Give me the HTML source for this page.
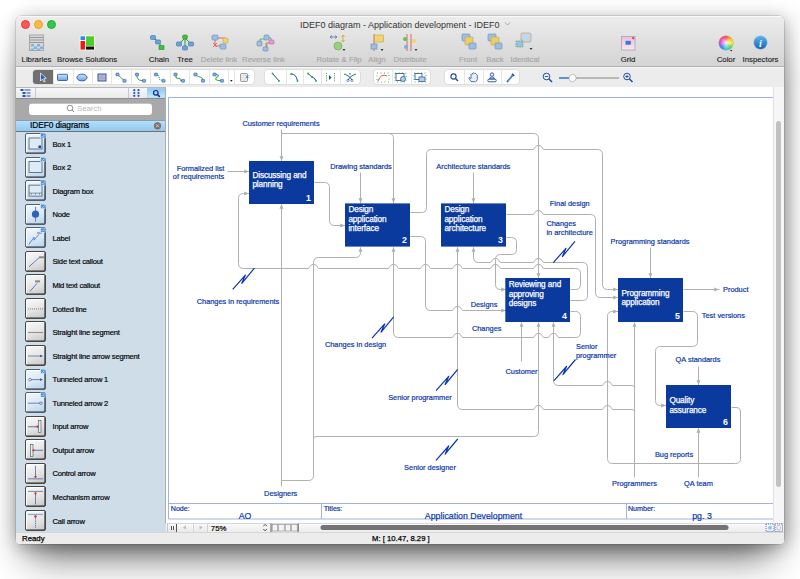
<!DOCTYPE html>
<html><head><meta charset="utf-8">
<style>
*{margin:0;padding:0;box-sizing:border-box}
html,body{width:800px;height:579px;overflow:hidden;background:#fff;font-family:"Liberation Sans",sans-serif}
.a{position:absolute}
#shadow{position:absolute;left:16px;top:16px;width:768px;height:528px;border-radius:5px;box-shadow:0 24px 36px -12px rgba(0,0,0,0.6),0 4px 16px rgba(0,0,0,0.18),6px 0 20px rgba(0,0,0,0.15),0 0 0 0.5px rgba(0,0,0,0.22)}
#win{position:absolute;left:16px;top:16px;width:768px;height:528px;border-radius:5px 5px 4px 4px;overflow:hidden;background:#ececec}
#tb1{position:absolute;left:0;top:0;width:768px;height:51px;background:linear-gradient(#ededed,#d4d4d4);box-shadow:inset 0 1px 0 #f9f9f9;border-bottom:1px solid #b1b1b1}
#tb2{position:absolute;left:0;top:51px;width:768px;height:21px;background:#ececec;border-top:1px solid #f6f6f6;border-bottom:1px solid #a9a9a9}
.tl{position:absolute;width:9px;height:9px;border-radius:50%;top:4px}
.lbl{position:absolute;font-size:7.8px;color:#1a1a1a;-webkit-text-stroke:0.12px currentColor;white-space:nowrap;text-align:center}
.dis{color:#a5a5a5}
.grp{position:absolute;top:3px;height:14px;background:#fff;border-radius:3px;box-shadow:0 0 0 0.5px #cfcfcf}
.sep{position:absolute;top:0;width:1px;height:14px;background:#e6e6e6}
#side{position:absolute;left:0;top:71px;width:150px;height:445px;background:#cfdde8}
.it{position:absolute;left:9px;width:21px;height:21px;border:1px solid #474747;border-radius:2px;background:linear-gradient(160deg,#fbfbfb 0%,#e4e4e4 55%,#c6c6c6 100%);box-shadow:inset -0.6px -0.6px 0 #2e2e2e,inset 1px 1px 0 #fff}
.itb{background:linear-gradient(160deg,#f3f8fd 0%,#d9e8f5 55%,#b9d2ea 100%);border-color:#4b5f78}
.itl{position:absolute;left:36px;font-size:7.6px;color:#000;white-space:nowrap;letter-spacing:-0.2px;-webkit-text-stroke:0.18px #000}
#canvas{position:absolute;left:150px;top:71px;width:607px;height:436px;background:#fff}
#status{position:absolute;left:0;top:516px;width:768px;height:12px;background:#ececec;border-top:1px solid #d6d6d6}
svg text{font-family:"Liberation Sans",sans-serif}
</style></head><body>
<div id="shadow"></div>
<div id="win">
  <div id="tb1">
    <div class="tl" style="left:5px;background:#fc5753;border:0.5px solid #de3f3b"></div>
    <div class="tl" style="left:18px;background:#fdbc40;border:0.5px solid #de9f34"></div>
    <div class="tl" style="left:31px;background:#33c748;border:0.5px solid #27aa35"></div>
    <div class="a" style="left:284px;top:3.7px;font-size:9px;color:#333;white-space:nowrap">IDEF0 diagram - Application development - IDEF0</div><svg class="a" style="left:488px;top:5px" width="8" height="6"><path d="M1,1.5 L3.5,4 L6,1.5" stroke="#9a9a9a" stroke-width="0.9" fill="none"/></svg>
    <svg class="a" style="left:0;top:0" width="768" height="50">
      <!-- Libraries -->
      <rect x="13.5" y="19" width="14" height="15.5" fill="#d8d8d8" stroke="#9a9a9a" stroke-width="0.8"/>
      <g stroke="#8f8f8f" stroke-width="0.9"><line x1="14" y1="21.5" x2="27" y2="21.5"/><line x1="14" y1="24" x2="27" y2="24"/><line x1="14" y1="26.5" x2="27" y2="26.5"/></g>
      <g fill="#7fb2e3"><rect x="15" y="28" width="3" height="2.5"/><rect x="21" y="28" width="3" height="2.5"/><rect x="18" y="30.5" width="3" height="2.5"/><rect x="24" y="30.5" width="3" height="2.5"/><rect x="15" y="32.5" width="3" height="2"/><rect x="21" y="32.5" width="3" height="2"/></g>
      <!-- Browse Solutions -->
      <rect x="63.5" y="19.3" width="15.4" height="15.2" rx="2" fill="#fff" stroke="#e3e3e3" stroke-width="0.6"/>
      <rect x="64.5" y="20.3" width="4.5" height="3.8" fill="#2b8ae6"/>
      <rect x="64.5" y="25" width="4.5" height="8.6" fill="#f0190f"/>
      <rect x="70" y="20.3" width="8" height="9.6" fill="#4fcb2a"/>
      <rect x="70" y="30.5" width="8" height="3.1" fill="#111"/>
      <!-- Chain -->
      <g stroke="#2e9c2e" stroke-width="1" fill="none"><path d="M137,22 L142,25 L145,30"/></g>
      <rect x="134.5" y="19.5" width="5" height="4" rx="1" fill="#6aa4dd" stroke="#3c6fb0" stroke-width="0.6"/>
      <rect x="139.5" y="24" width="5" height="4" rx="1" fill="#6aa4dd" stroke="#3c6fb0" stroke-width="0.6"/>
      <path d="M143,29.5 h5 v4 h-5z" fill="#3cc23c" stroke="#2a8f2a" stroke-width="0.6"/>
      <!-- Tree -->
      <g stroke="#2e9c2e" stroke-width="1" fill="none"><path d="M169,22 L163,28 M169,22 L175,28 M169,22 L169,31"/></g>
      <rect x="166.5" y="19" width="5" height="4" rx="1.5" fill="#3cc23c" stroke="#2a8f2a" stroke-width="0.6"/>
      <rect x="160.5" y="26" width="5" height="4" rx="1" fill="#6aa4dd" stroke="#3c6fb0" stroke-width="0.6"/>
      <rect x="172.5" y="26" width="5" height="4" rx="1" fill="#6aa4dd" stroke="#3c6fb0" stroke-width="0.6"/>
      <rect x="166.5" y="30" width="5" height="4" rx="1" fill="#6aa4dd" stroke="#3c6fb0" stroke-width="0.6"/>
      <!-- Delete link -->
      <g opacity="0.82">
      <path d="M199,22 v8 M199,30 h7 M201,22 h8" stroke="#e0503c" stroke-width="1" fill="none"/>
      <rect x="196" y="19" width="6" height="5" rx="1" fill="#8fb8e6" stroke="#4a78b0" stroke-width="0.6"/>
      <rect x="207" y="22" width="5" height="5" rx="1" fill="#f2d25a" stroke="#b59a2a" stroke-width="0.6"/>
      <rect x="204" y="28" width="6" height="5" rx="1" fill="#8fb8e6" stroke="#4a78b0" stroke-width="0.6"/>
      <path d="M197,27 l4,4 M201,27 l-4,4" stroke="#e0503c" stroke-width="1"/>
      </g>
      <!-- Reverse link -->
      <g opacity="0.82">
      <path d="M244,26 v-3 h4 M252,22 h3 v4 M251,28 v3" stroke="#3cb043" stroke-width="1" fill="none"/>
      <path d="M253,27 h-3 v5" stroke="#e0503c" stroke-width="1" fill="none"/>
      <rect x="248" y="19" width="5" height="5" rx="1" fill="#8fb8e6" stroke="#4a78b0" stroke-width="0.6"/>
      <rect x="241" y="25" width="5" height="5" rx="1" fill="#8fb8e6" stroke="#4a78b0" stroke-width="0.6"/>
      <rect x="253" y="24" width="5" height="4" rx="1" fill="#e38fd0" stroke="#b04a9a" stroke-width="0.6"/>
      <rect x="247" y="31" width="5" height="4" rx="1" fill="#8fb8e6" stroke="#4a78b0" stroke-width="0.6"/>
      </g>
      <!-- Rotate & Flip -->
      <g opacity="0.82">
      <path d="M314,21 h7 M314,21 l2,-1.5 M314,21 l2,1.5 M321,21 l-2,-1.5 M321,21 l-2,1.5" stroke="#4a78b0" stroke-width="1" fill="none"/>
      <path d="M327,19 v7 M327,19 l-1.5,2 M327,19 l1.5,2 M327,26 l-1.5,-2 M327,26 l1.5,-2" stroke="#d8a020" stroke-width="1" fill="none"/>
      <ellipse cx="322" cy="30" rx="4" ry="4" fill="#8ccf6a" stroke="#4a9a3a" stroke-width="0.6"/>
      </g>
      <path d="M326.5,33 l3,0 l-1.5,2z" fill="#333"/>
      <!-- Align -->
      <g opacity="0.82">
      <path d="M358,18 v17" stroke="#e0503c" stroke-width="1"/>
      <rect x="358.5" y="19" width="9" height="7" fill="#f2d25a" stroke="#b59a2a" stroke-width="0.6"/>
      <rect x="355" y="28" width="6" height="5" fill="#8fb8e6" stroke="#4a78b0" stroke-width="0.6"/>
      </g>
      <path d="M364.5,33 l3,0 l-1.5,2z" fill="#333"/>
      <!-- Distribute -->
      <g opacity="0.82">
      <path d="M391,18 v17 M395,18 v17" stroke="#e0503c" stroke-width="1"/>
      <ellipse cx="389" cy="23" rx="2" ry="2" fill="#3cc23c"/>
      <ellipse cx="398" cy="25" rx="2" ry="2" fill="#f2d25a"/>
      <ellipse cx="390" cy="31" rx="2" ry="2" fill="#6aa4dd"/>
      </g>
      <path d="M398.5,33 l3,0 l-1.5,2z" fill="#333"/>
      <!-- Front -->
      <g opacity="0.82">
      <rect x="446" y="18" width="8" height="7" rx="1" fill="#8fb8e6" stroke="#4a78b0" stroke-width="0.6"/>
      <rect x="449" y="21" width="8" height="8" rx="1" fill="#f2c94a" stroke="#b59a2a" stroke-width="0.6"/>
      <rect x="453" y="27" width="7" height="6" rx="1" fill="#8fb8e6" stroke="#4a78b0" stroke-width="0.6"/>
      </g>
      <!-- Back -->
      <g opacity="0.82">
      <rect x="472" y="18" width="8" height="7" rx="1" fill="#8fb8e6" stroke="#4a78b0" stroke-width="0.6"/>
      <rect x="475" y="21" width="8" height="8" rx="1" fill="#f2c94a" stroke="#b59a2a" stroke-width="0.6"/>
      <rect x="479" y="27" width="7" height="6" rx="1" fill="#8fb8e6" stroke="#4a78b0" stroke-width="0.6"/>
      </g>
      <!-- Identical -->
      <g opacity="0.82">
      <rect x="505" y="17" width="10" height="9" rx="1" fill="#b6d7f0" stroke="#e08a6a" stroke-width="0.8"/>
      <rect x="500" y="25" width="7" height="6" fill="#8fb8e6" stroke="#3cb043" stroke-width="0.8" stroke-dasharray="1.5 1"/>
      <path d="M507,25 l-2,-2" stroke="#e08a6a" stroke-width="0.8"/>
      </g>
      <path d="M513.5,32 l3,0 l-1.5,2z" fill="#333"/>
      <!-- Grid -->
      <defs><linearGradient id="gg" x1="0" y1="0" x2="0" y2="1"><stop offset="0" stop-color="#f4bcd0"/><stop offset="1" stop-color="#fbe6ee"/></linearGradient></defs>
      <rect x="605.5" y="20.5" width="13.5" height="13.5" fill="url(#gg)" stroke="#9aa9c0" stroke-width="0.8"/>
      <rect x="609.2" y="24.5" width="6" height="4.5" rx="1" fill="#3c7ad6" stroke="#fff" stroke-width="0.4"/>
      <circle cx="617.2" cy="22.2" r="1.1" fill="#e03c3c"/>
      <!-- Color -->
      <path d="M714,34 l2.4,0 l-1.2,1.6z" fill="#222"/>
      <!-- Inspectors -->
      <defs><linearGradient id="ig" x1="0" y1="0" x2="0" y2="1"><stop offset="0" stop-color="#5fb6f2"/><stop offset="1" stop-color="#1262b8"/></linearGradient></defs>
      <circle cx="744.5" cy="26.5" r="7" fill="url(#ig)" stroke="#f4ddc8" stroke-width="0.6"/>
      <text x="744.5" y="31" font-size="10" font-weight="bold" font-style="italic" fill="#fff" text-anchor="middle" style="font-family:'Liberation Serif',serif">i</text>
    </svg>
    <div class="a" style="left:703px;top:19.5px;width:14px;height:14px;border-radius:50%;background:radial-gradient(circle,rgba(255,255,255,0.9) 0,rgba(255,255,255,0) 70%),conic-gradient(#ff2d2d,#ffb000,#f2ec1a,#35d04a,#1ec8e0,#2a6cf0,#b43ce6,#ff2d9a,#ff2d2d);box-shadow:0 0 0 0.5px rgba(0,0,0,0.3)"></div>
    <div class="lbl" style="left:0;top:38.5px;width:41px">Libraries</div>
    <div class="lbl" style="left:41px;top:38.5px;width:60px">Browse Solutions</div>
    <div class="lbl" style="left:128px;top:38.5px;width:30px">Chain</div>
    <div class="lbl" style="left:154px;top:38.5px;width:30px">Tree</div>
    <div class="lbl dis" style="left:183px;top:38.5px;width:40px">Delete link</div>
    <div class="lbl dis" style="left:224px;top:38.5px;width:47px">Reverse link</div>
    <div class="lbl dis" style="left:298px;top:38.5px;width:50px">Rotate &amp; Flip</div>
    <div class="lbl dis" style="left:346px;top:38.5px;width:30px">Align</div>
    <div class="lbl dis" style="left:374px;top:38.5px;width:40px">Distribute</div>
    <div class="lbl dis" style="left:437px;top:38.5px;width:30px">Front</div>
    <div class="lbl dis" style="left:464px;top:38.5px;width:30px">Back</div>
    <div class="lbl dis" style="left:489px;top:38.5px;width:40px">Identical</div>
    <div class="lbl" style="left:597px;top:38.5px;width:30px">Grid</div>
    <div class="lbl" style="left:695px;top:38.5px;width:30px">Color</div>
    <div class="lbl" style="left:724px;top:38.5px;width:41px">Inspectors</div>
  </div>
  <div id="tb2"></div>
  
  <div id="canvas"></div>
  <div id="status">
    <div class="a" style="left:6px;top:0.6px;font-size:7.8px;color:#000;-webkit-text-stroke:0.25px #000">Ready</div>
    <div class="a" style="left:356px;top:0.8px;font-size:7.7px;color:#000;white-space:nowrap;-webkit-text-stroke:0.25px #000">M: [ 10.47, 8.29 ]</div>
  </div>
</div>
<div class="grp" style="left:33px;top:70px;width:221px"><div class="sep" style="left:20px"></div><div class="sep" style="left:40px"></div><div class="sep" style="left:59px"></div><div class="sep" style="left:78px"></div><div class="sep" style="left:98px"></div><div class="sep" style="left:117px"></div><div class="sep" style="left:137px"></div><div class="sep" style="left:156px"></div><div class="sep" style="left:176px"></div><div class="sep" style="left:195px"></div><div class="sep" style="left:201px"></div></div><div class="grp" style="left:265px;top:70px;width:95px"><div class="sep" style="left:21px"></div><div class="sep" style="left:38px"></div><div class="sep" style="left:56px"></div><div class="sep" style="left:75px"></div></div><div class="grp" style="left:374px;top:70px;width:56px"><div class="sep" style="left:18px"></div><div class="sep" style="left:37px"></div></div><div class="grp" style="left:445px;top:70px;width:74px"><div class="sep" style="left:19px"></div><div class="sep" style="left:38px"></div><div class="sep" style="left:56px"></div></div><div class="a" style="left:33px;top:70px;width:20px;height:14px;background:#6f6f6f;border-radius:3px 0 0 3px"></div>
<svg class="a" style="left:0;top:0;z-index:3" width="800" height="100">
<defs><linearGradient id="bg1" x1="0" y1="0" x2="0" y2="1"><stop offset="0" stop-color="#cfe3f7"/><stop offset="1" stop-color="#6fa3dc"/></linearGradient></defs>
<path d="M40.5,73 L40.5,81 L42.5,79 L44,82 L45.2,81.4 L43.8,78.5 L46.3,78.3 Z" fill="#2b5cc0" stroke="#fff" stroke-width="0.7"/>
<rect x="57.5" y="74.3" width="10" height="6.2" rx="0.8" fill="url(#bg1)" stroke="#1d4aa0" stroke-width="0.8"/>
<ellipse cx="82" cy="77.5" rx="5.1" ry="3.4" fill="url(#bg1)" stroke="#1d4aa0" stroke-width="0.8"/>
<rect x="98" y="74" width="8" height="7" fill="#c0b8d8" stroke="#1d4aa0" stroke-width="0.9"/>
<rect x="99.5" y="75.5" width="5" height="4" fill="#a8a8c8"/>
<path d="M117.5,74.5 L124,80.5" stroke="#2a9a2a" stroke-width="0.9"/><rect x="115.9" y="73.1" width="3.2" height="2.8" rx="0.6" fill="#7fb0e6" stroke="#2f5fb0" stroke-width="0.6"/><rect x="122.9" y="79.39999999999999" width="3.2" height="2.8" rx="0.6" fill="#7fb0e6" stroke="#2f5fb0" stroke-width="0.6"/>
<path d="M137,74.5 Q136.5,80 141,80.5 L144,80.5" stroke="#2a9a2a" stroke-width="0.9" fill="none"/><rect x="135.4" y="73.1" width="3.2" height="2.8" rx="0.6" fill="#7fb0e6" stroke="#2f5fb0" stroke-width="0.6"/><rect x="142.4" y="79.39999999999999" width="3.2" height="2.8" rx="0.6" fill="#7fb0e6" stroke="#2f5fb0" stroke-width="0.6"/>
<path d="M156,74.5 L159,76 L159.5,79.5 L163,80.5" stroke="#2a9a2a" stroke-width="0.9" fill="none" stroke-dasharray="1.3 0.8"/><rect x="154.4" y="73.1" width="3.2" height="2.8" rx="0.6" fill="#7fb0e6" stroke="#2f5fb0" stroke-width="0.6"/><rect x="161.9" y="79.39999999999999" width="3.2" height="2.8" rx="0.6" fill="#7fb0e6" stroke="#2f5fb0" stroke-width="0.6"/>
<path d="M176,74.5 L176,78 L180,78.5 L180.5,80.5 L183,80.5" stroke="#2a9a2a" stroke-width="0.9" fill="none"/><rect x="173.9" y="73.1" width="3.2" height="2.8" rx="0.6" fill="#7fb0e6" stroke="#2f5fb0" stroke-width="0.6"/><rect x="181.4" y="79.39999999999999" width="3.2" height="2.8" rx="0.6" fill="#7fb0e6" stroke="#2f5fb0" stroke-width="0.6"/>
<path d="M195.5,74.5 Q197,76.5 200,77 Q203,77.5 203,80.5" stroke="#2a9a2a" stroke-width="0.9" fill="none"/><rect x="193.9" y="73.1" width="3.2" height="2.8" rx="0.6" fill="#7fb0e6" stroke="#2f5fb0" stroke-width="0.6"/><rect x="201.4" y="79.39999999999999" width="3.2" height="2.8" rx="0.6" fill="#7fb0e6" stroke="#2f5fb0" stroke-width="0.6"/>
<path d="M215,74.5 L218.5,75 Q219,77 216,77.5 Q214.5,80 218,80.5 L222,80.5" stroke="#2a9a2a" stroke-width="0.9" fill="none"/><rect x="212.9" y="73.1" width="3.2" height="2.8" rx="0.6" fill="#7fb0e6" stroke="#2f5fb0" stroke-width="0.6"/><rect x="220.4" y="79.39999999999999" width="3.2" height="2.8" rx="0.6" fill="#7fb0e6" stroke="#2f5fb0" stroke-width="0.6"/>
<path d="M230,80 l2.6,0 l-1.3,1.8z" fill="#222"/>
<rect x="240.5" y="73.5" width="7" height="8" rx="1" fill="#e8e8e8" stroke="#777" stroke-width="0.7"/>
<path d="M246,75.5 l2.6,2.6 M248.6,75.5 l-2.6,2.6" stroke="#1d6fd0" stroke-width="0.8"/>
<path d="M272.5,73.5 L279,81" stroke="#1d4aa0" stroke-width="1"/><circle cx="272.5" cy="73.5" r="0.9" fill="#2ab02a"/><circle cx="279" cy="81" r="0.9" fill="#2ab02a"/>
<path d="M291,74 Q296,73.5 297.5,81" stroke="#1d4aa0" stroke-width="1" fill="none"/><circle cx="291" cy="74" r="0.9" fill="#2ab02a"/><circle cx="297.5" cy="81" r="0.9" fill="#2ab02a"/>
<path d="M308,73.5 L312,77 Q315,77.5 316,81" stroke="#1d4aa0" stroke-width="1" fill="none"/><circle cx="308" cy="73.5" r="0.9" fill="#2ab02a"/><circle cx="312" cy="77" r="0.9" fill="#2ab02a"/><circle cx="316" cy="81" r="0.9" fill="#2ab02a"/>
<path d="M326.5,73 v9 M334.5,73 v9" stroke="#2a9a2a" stroke-width="0.8" stroke-dasharray="1.2 1"/><path d="M329,75 l2.5,2.5 l-2.5,2.5z" fill="#1d4aa0"/>
<path d="M345.5,74.5 Q350,76 352,80 M354.5,74.5 Q350,76 348,80" stroke="#1d4aa0" stroke-width="0.9" fill="none"/><circle cx="348" cy="80.5" r="1.1" fill="none" stroke="#1d4aa0" stroke-width="0.6"/><circle cx="352" cy="80.5" r="1.1" fill="none" stroke="#1d4aa0" stroke-width="0.6"/><circle cx="345" cy="74.3" r="0.9" fill="#2ab02a"/><circle cx="355" cy="74.3" r="0.9" fill="#2ab02a"/><circle cx="350" cy="73.8" r="0.9" fill="#2ab02a"/>
<path d="M378,81 Q381,73 387,76" stroke="#d04040" stroke-width="0.9" fill="none"/><path d="M377,73 h12 v9 h-12z" stroke="#2a9a2a" stroke-width="0.8" fill="none" stroke-dasharray="1 2.5"/>
<rect x="396" y="73.5" width="8" height="7" fill="none" stroke="#1d4aa0" stroke-width="0.8"/><circle cx="403" cy="79" r="2.5" fill="#b8d0ee" stroke="#1d4aa0" stroke-width="0.7"/><path d="M395,73 h11 v9 h-11z" stroke="#2a9a2a" stroke-width="0.8" fill="none" stroke-dasharray="1 2.5"/>
<rect x="415" y="73.5" width="7" height="6" fill="none" stroke="#1d4aa0" stroke-width="0.8"/><rect x="419" y="77" width="6" height="4.5" fill="#b8d0ee" stroke="#1d4aa0" stroke-width="0.7"/><path d="M414,73 h12 v9 h-12z" stroke="#2a9a2a" stroke-width="0.8" fill="none" stroke-dasharray="1 2.5"/>
<circle cx="453.5" cy="76.5" r="2.6" fill="none" stroke="#1d4aa0" stroke-width="1.1"/><path d="M455.5,78.5 l2.5,2.5" stroke="#1d4aa0" stroke-width="1.4"/>
<path d="M471,81.5 L469,78.5 Q468.5,77.5 469.5,77.5 L471,78.5 L471,74.5 Q471.5,73.5 472.3,74.3 L472.6,73.2 Q473.4,72.5 474,73.4 L474.8,73.3 Q475.6,73 476,74 L476.7,74.6 Q477.5,74.8 477.4,76 L477.2,79.5 Q476.8,81.5 475.5,81.8z" fill="#e8f1fb" stroke="#1d4aa0" stroke-width="0.75"/>
<circle cx="492" cy="74.6" r="1.7" fill="#fff" stroke="#1d4aa0" stroke-width="0.9"/><path d="M489.5,78.8 Q489.5,77 492,77 Q494.5,77 494.5,78.8z" fill="#fff" stroke="#1d4aa0" stroke-width="0.8"/><rect x="487.8" y="79.2" width="8.4" height="2.6" rx="1.2" fill="#fff" stroke="#1d4aa0" stroke-width="0.9"/>
<path d="M507,82 L512.5,75.5" stroke="#1d4aa0" stroke-width="1.6"/><path d="M507.6,81.2 L512,76.2" stroke="#cfe3f7" stroke-width="0.6"/><path d="M512,73.8 l2.2,2.2" stroke="#1d4aa0" stroke-width="1.6"/>
<circle cx="546.5" cy="76.5" r="3.3" fill="#eef4fb" stroke="#1d4aa0" stroke-width="1"/><path d="M544.8,76.5 h3.4" stroke="#1d4aa0" stroke-width="0.9"/><path d="M549,79 l3,3" stroke="#1d4aa0" stroke-width="1.5"/>
<path d="M559,78 h10" stroke="#2f7fe8" stroke-width="1.6"/><path d="M576,78 h43" stroke="#a9a9a9" stroke-width="1.4"/>
<circle cx="572.5" cy="78" r="3.6" fill="#fff" stroke="#9c9c9c" stroke-width="0.6"/>
<circle cx="627" cy="76.5" r="3.3" fill="#eef4fb" stroke="#1d4aa0" stroke-width="1"/><path d="M625.3,76.5 h3.4 M627,74.8 v3.4" stroke="#1d4aa0" stroke-width="0.9"/><path d="M629.5,79 l3,3" stroke="#1d4aa0" stroke-width="1.5"/>
</svg>
<div class="a" style="left:16px;top:87px;width:150px;height:11px;background:linear-gradient(#f7f7f7,#e9e9e9);border-top:0.5px solid #b9b9b9"></div>
<div class="a" style="left:35px;top:88px;width:1px;height:10px;background:#c9c9c9"></div>
<div class="a" style="left:127.5px;top:88px;width:1px;height:10px;background:#c9c9c9"></div>
<div class="a" style="left:147px;top:88px;width:19px;height:10px;background:linear-gradient(#8fc3f1,#c6ebfd);box-shadow:inset 0 0 0 0.5px #a8d8f0"></div>
<div class="a" style="left:16px;top:98px;width:150px;height:21.5px;background:#a9a9a9;border-top:0.5px solid #8c8c8c"></div>
<div class="a" style="left:28.5px;top:102.5px;width:123px;height:12px;background:#fff;border-radius:3px;box-shadow:0 0.5px 0 #8a8a8a inset"></div>
<div class="a" style="left:77px;top:103.5px;font-size:7.8px;color:#b9b9b9">Search</div>
<div class="a" style="left:16px;top:119.5px;width:150px;height:12px;background:linear-gradient(#b6def9,#8ecaf4);border-top:0.5px solid #7fa0b8;border-bottom:0.8px solid #7d6b60"></div>
<div class="a" style="left:30px;top:120.3px;font-size:8.4px;color:#000;letter-spacing:-0.1px;-webkit-text-stroke:0.2px #000">IDEF0 diagrams</div>
<div class="a" style="left:16px;top:132px;width:150px;height:400px;background:#cfdde8"></div>
<div class="a" style="left:164.6px;top:87px;width:1px;height:436px;background:#a9adb2"></div>
<div class="it itb" style="left:25px;top:133.00px"></div><div class="itl" style="left:52.5px;top:139.60px">Box 1</div><div class="it itb" style="left:25px;top:156.56px"></div><div class="itl" style="left:52.5px;top:163.16px">Box 2</div><div class="it itb" style="left:25px;top:180.12px"></div><div class="itl" style="left:52.5px;top:186.72px">Diagram box</div><div class="it itb" style="left:25px;top:203.68px"></div><div class="itl" style="left:52.5px;top:210.28px">Node</div><div class="it itb" style="left:25px;top:227.24px"></div><div class="itl" style="left:52.5px;top:233.84px">Label</div><div class="it" style="left:25px;top:250.80px"></div><div class="itl" style="left:52.5px;top:257.40px">Side text callout</div><div class="it" style="left:25px;top:274.36px"></div><div class="itl" style="left:52.5px;top:280.96px">Mid text callout</div><div class="it" style="left:25px;top:297.92px"></div><div class="itl" style="left:52.5px;top:304.52px">Dotted line</div><div class="it" style="left:25px;top:321.48px"></div><div class="itl" style="left:52.5px;top:328.08px">Straight line segment</div><div class="it" style="left:25px;top:345.04px"></div><div class="itl" style="left:52.5px;top:351.64px">Straight line arrow segment</div><div class="it itb" style="left:25px;top:368.60px"></div><div class="itl" style="left:52.5px;top:375.20px">Tunneled arrow 1</div><div class="it itb" style="left:25px;top:392.16px"></div><div class="itl" style="left:52.5px;top:398.76px">Tunneled arrow 2</div><div class="it" style="left:25px;top:415.72px"></div><div class="itl" style="left:52.5px;top:422.32px">Input arrow</div><div class="it" style="left:25px;top:439.28px"></div><div class="itl" style="left:52.5px;top:445.88px">Output arrow</div><div class="it" style="left:25px;top:462.84px"></div><div class="itl" style="left:52.5px;top:469.44px">Control arrow</div><div class="it" style="left:25px;top:486.40px"></div><div class="itl" style="left:52.5px;top:493.00px">Mechanism arrow</div><div class="it" style="left:25px;top:509.96px"></div><div class="itl" style="left:52.5px;top:516.56px">Call arrow</div>
<svg class="a" style="left:0;top:0;z-index:2" width="170" height="540"><defs><linearGradient id="ib" x1="0" y1="0" x2="1" y2="1"><stop offset="0" stop-color="#f5faff"/><stop offset="1" stop-color="#c9def2"/></linearGradient></defs><rect x="29" y="138.0" width="13" height="11" fill="#dcebf8" stroke="#4a5a70" stroke-width="0.8"/><rect x="38.5" y="145.5" width="2.5" height="2.5" fill="#1d3f9a"/><rect x="40.5" y="133.8" width="4.6" height="4.2" fill="#3b8fe0" stroke="#fff" stroke-width="0.5"/><path d="M41.6,136.0 l1,1 l1.6,-2" stroke="#fff" stroke-width="0.6" fill="none"/><rect x="29" y="161.56" width="13" height="11" fill="#dcebf8" stroke="#4a5a70" stroke-width="0.8"/><rect x="40.5" y="157.36" width="4.6" height="4.2" fill="#3b8fe0" stroke="#fff" stroke-width="0.5"/><path d="M41.6,159.56 l1,1 l1.6,-2" stroke="#fff" stroke-width="0.6" fill="none"/><rect x="29" y="185.12" width="13" height="11" fill="#dcebf8" stroke="#4a5a70" stroke-width="0.8"/><path d="M29,193.12 h13 M31.5,193.12 v1.5 M35.5,193.12 v1.5 M39.5,193.12 v1.5" stroke="#4a5a70" stroke-width="0.6"/><rect x="40.5" y="180.92000000000002" width="4.6" height="4.2" fill="#3b8fe0" stroke="#fff" stroke-width="0.5"/><path d="M41.6,183.12 l1,1 l1.6,-2" stroke="#fff" stroke-width="0.6" fill="none"/><path d="M35.5,206.68 v15" stroke="#4a6aa0" stroke-width="0.8"/><circle cx="35.5" cy="214.18" r="3.6" fill="#2d62b8"/><rect x="40.5" y="204.48000000000002" width="4.6" height="4.2" fill="#3b8fe0" stroke="#fff" stroke-width="0.5"/><path d="M41.6,206.68 l1,1 l1.6,-2" stroke="#fff" stroke-width="0.6" fill="none"/><path d="M29,244.24 L34,237.24 L34,240.24 L39,234.24" stroke="#2d62b8" stroke-width="0.7" fill="none"/><rect x="37" y="232.24" width="5" height="1.5" fill="#999"/><rect x="40.5" y="228.04000000000002" width="4.6" height="4.2" fill="#3b8fe0" stroke="#fff" stroke-width="0.5"/><path d="M41.6,230.24 l1,1 l1.6,-2" stroke="#fff" stroke-width="0.6" fill="none"/><path d="M29,266.8 L39,257.8" stroke="#2d62b8" stroke-width="0.8"/><rect x="39" y="256.3" width="5" height="2" fill="#8a8a8a"/><path d="M30,291.36 L37,283.36" stroke="#2d62b8" stroke-width="0.8"/><rect x="35" y="280.36" width="5" height="2" fill="#8a8a8a"/><path d="M28,308.91999999999996 h15" stroke="#555" stroke-width="0.7" stroke-dasharray="1 1"/><path d="M28,332.48 h15" stroke="#666" stroke-width="0.7"/><path d="M28,356.03999999999996 h14" stroke="#3a5a9a" stroke-width="0.7"/><path d="M43,356.03999999999996 l-3,-1.3 v2.6z" fill="#3a5a9a"/><path d="M31,379.6 h11" stroke="#3a5a9a" stroke-width="0.7"/><circle cx="30" cy="379.6" r="1.3" fill="none" stroke="#3a5a9a" stroke-width="0.6"/><path d="M43,379.6 l-3,-1.3 v2.6z" fill="#3a5a9a"/><rect x="40.5" y="369.40000000000003" width="4.6" height="4.2" fill="#3b8fe0" stroke="#fff" stroke-width="0.5"/><path d="M41.6,371.6 l1,1 l1.6,-2" stroke="#fff" stroke-width="0.6" fill="none"/><path d="M28,403.15999999999997 h12" stroke="#3a5a9a" stroke-width="0.7"/><circle cx="41" cy="403.15999999999997" r="1.3" fill="none" stroke="#3a5a9a" stroke-width="0.6"/><rect x="40.5" y="392.96" width="4.6" height="4.2" fill="#3b8fe0" stroke="#fff" stroke-width="0.5"/><path d="M41.6,395.15999999999997 l1,1 l1.6,-2" stroke="#fff" stroke-width="0.6" fill="none"/><path d="M28,426.71999999999997 h10" stroke="#3a5a9a" stroke-width="0.8"/><rect x="38.5" y="420.71999999999997" width="2.5" height="12" fill="#d8f0fb" stroke="#333" stroke-width="0.5"/><circle cx="37.5" cy="426.71999999999997" r="1.1" fill="#e02020"/><path d="M34,450.28 h9" stroke="#3a5a9a" stroke-width="0.8"/><rect x="30.5" y="444.28" width="2.5" height="12" fill="#d8f0fb" stroke="#333" stroke-width="0.5"/><circle cx="33.5" cy="450.28" r="1.1" fill="#e02020"/><path d="M35.5,465.84 v12 M28,478.84 h15" stroke="#3a5a9a" stroke-width="0.7" fill="none"/><circle cx="35.5" cy="476.84" r="1.1" fill="#e02020"/><path d="M28,491.4 h15 M35.5,492.4 v12" stroke="#3a5a9a" stroke-width="0.7" fill="none"/><circle cx="35.5" cy="493.4" r="1.1" fill="#e02020"/><path d="M28,514.46 h15" stroke="#8ab0d8" stroke-width="1.4"/><path d="M35.5,515.96 v12" stroke="#3a5a9a" stroke-width="0.7" stroke-dasharray="1.5 0.7" fill="none"/><circle cx="35.5" cy="516.46" r="1.2" fill="#e02020"/><g fill="#1f4fb8"><rect x="20.5" y="89" width="3" height="2" rx="0.5"/><rect x="24.5" y="89.5" width="6" height="1"/><rect x="22.5" y="92" width="3" height="2" rx="0.5"/><rect x="26.5" y="92.5" width="4" height="1"/><rect x="22.5" y="95" width="3" height="2" rx="0.5"/><rect x="26.5" y="95.5" width="4" height="1"/></g><g fill="#1f4fb8"><circle cx="134.3" cy="90.2" r="1.1"/><circle cx="134.3" cy="93" r="1.1"/><circle cx="134.3" cy="95.8" r="1.1"/><circle cx="138.5" cy="90.2" r="1.1"/><circle cx="138.5" cy="93" r="1.1"/><circle cx="138.5" cy="95.8" r="1.1"/></g><circle cx="155.8" cy="92.8" r="2.3" fill="none" stroke="#0f2f90" stroke-width="1.2"/><path d="M157.5,94.6 l2.3,2.3" stroke="#0f2f90" stroke-width="1.5"/><circle cx="70" cy="108" r="2.8" fill="none" stroke="#777" stroke-width="0.8"/><path d="M72,110 l2,2" stroke="#777" stroke-width="0.9"/><circle cx="157.5" cy="125.8" r="3.6" fill="#7a6e68"/><path d="M156,124.3 l3,3 M159,124.3 l-3,3" stroke="#d8d8d8" stroke-width="0.9"/></svg>
<!--DIAG--><svg class="a" style="left:0;top:0;z-index:1" width="800" height="579">
<g fill="none" stroke="#93acdf" stroke-width="0.9"><path d="M168.5,519 V97.5 H773"/><path d="M168.5,503.5 H773 M168.5,519 H773 M321.5,503.5 V519 M626.5,503.5 V519"/></g>
<g fill="none" stroke="#b0b0b0" stroke-width="1">
<path d="M281.5,129.5 L281.50,161.50"/>
<path d="M281.5,133.5 L388.50,133.50 Q393.5,133.5 393.50,138.50 L393.50,203.50"/>
<path d="M388.5,133.5 L533.50,133.50 Q538.5,133.5 538.50,138.50 L538.50,278.50"/>
<path d="M227.5,171.5 L249.50,171.50"/>
<path d="M314.5,182.5 L324.50,182.50 Q329.5,182.5 329.50,187.50 L329.50,220.50 Q329.5,225.5 334.50,225.50 L345.50,225.50"/>
<path d="M410.5,212.5 L421.50,212.50 Q426.5,212.5 426.50,207.50 L426.50,154.50 Q426.5,149.5 431.50,149.50 L533.5,149.5 Q535.75,145.2 538.5,145.2 Q541.25,145.2 543.5,149.5 L597.50,149.50 Q602.5,149.5 602.50,154.50 L602.50,284.50 Q602.5,289.5 607.50,289.50 L618.50,289.50"/>
<path d="M410.5,236.5 L420.50,236.50 Q425.5,236.5 425.50,241.50 L425.50,305.50 Q425.5,310.5 430.50,310.50 L452.5,310.5 Q454.75,306.2 457.5,306.2 Q460.25,306.2 462.5,310.5 L506.50,310.50"/>
<path d="M506.5,214.5 L533.5,214.5 Q535.75,210.2 538.5,210.2 Q541.25,210.2 543.5,214.5 L590.50,214.50 Q595.5,214.5 595.50,219.50 L595.50,292.50 Q595.5,297.5 600.50,297.50 L618.50,297.50"/>
<path d="M506.5,237.5 L511.50,237.50 Q516.5,237.5 516.50,242.50 L516.50,249.50 Q516.5,254.5 511.50,254.50 L500.50,254.50 Q495.5,254.5 495.50,259.50 L495.50,284.50 Q495.5,289.5 500.50,289.50 L506.50,289.50"/>
<path d="M570.5,289.5 L575.50,289.50 Q580.5,289.5 580.50,284.50 L580.50,273.50 Q580.5,268.5 575.50,268.50 L543.5,268.5 Q541.25,264.2 538.5,264.2 Q535.75,264.2 533.5,268.5 L500.5,268.5 Q498.25,264.2 495.5,264.2 Q492.75,264.2 490.5,268.5 L462.5,268.5 Q460.25,264.2 457.5,264.2 Q454.75,264.2 452.5,268.5 L430.5,268.5 Q428.25,264.2 425.5,264.2 Q422.75,264.2 420.5,268.5 L398.5,268.5 Q396.25,264.2 393.5,264.2 Q390.75,264.2 388.5,268.5 L318.5,268.5 Q316.25,264.2 313.5,264.2 Q310.75,264.2 308.5,268.5 L243.50,268.50 Q238.5,268.5 238.50,263.50 L238.50,198.50 Q238.5,193.5 243.50,193.50 L249.50,193.50"/>
<path d="M570.5,300.5 L582.50,300.50 Q587.5,300.5 587.50,295.50 L587.50,267.50 Q587.5,262.5 582.50,262.50 L543.5,262.5 Q541.25,258.2 538.5,258.2 Q535.75,258.2 533.5,262.5 L500.5,262.5 Q498.25,258.2 495.5,258.2 Q492.75,258.2 490.5,262.5 L478.50,262.50 Q473.5,262.5 473.50,257.50 L473.50,247.50"/>
<path d="M570.5,311.5 L575.50,311.50 Q580.5,311.5 580.50,316.50 L580.50,332.50 Q580.5,337.5 575.50,337.50 L558.5,337.5 Q556.25,333.2 553.5,333.2 Q550.75,333.2 548.5,337.5 L543.5,337.5 Q541.25,333.2 538.5,333.2 Q535.75,333.2 533.5,337.5 L462.5,337.5 Q460.25,333.2 457.5,333.2 Q454.75,333.2 452.5,337.5 L398.50,337.50 Q393.5,337.5 393.50,332.50 L393.50,247.50"/>
<path d="M281.5,204.5 L281.50,486.50"/>
<path d="M281.5,480.5 L308.50,480.50 Q313.5,480.5 313.50,475.50 L313.50,262.50 Q313.5,257.5 318.50,257.50 L355.50,257.50 Q360.5,257.5 360.50,252.50 L360.50,247.50"/>
<path d="M313.5,441.5 L313.50,439.00 Q313.5,436.5 316.00,436.50 L533.50,436.50 Q538.5,436.5 538.50,431.50 L538.50,322.50"/>
<path d="M634.5,477.5 L634.50,322.50"/>
<path d="M634.5,414.5 L634.50,412.00 Q634.5,409.5 632.00,409.50 L612.5,409.5 Q610.25,405.2 607.5,405.2 Q604.75,405.2 602.5,409.5 L543.5,409.5 Q541.25,405.2 538.5,405.2 Q535.75,405.2 533.5,409.5 L462.50,409.50 Q457.5,409.5 457.50,404.50 L457.50,247.50"/>
<path d="M634.5,390.5 L634.50,388.00 Q634.5,385.5 632.00,385.50 L612.5,385.5 Q610.25,381.2 607.5,381.2 Q604.75,381.2 602.5,385.5 L558.50,385.50 Q553.5,385.5 553.50,380.50 L553.50,322.50"/>
<path d="M521.5,361.5 L521.50,322.50"/>
<path d="M683.5,289.5 L719.50,289.50"/>
<path d="M683.5,311.5 L692.50,311.50 Q697.5,311.5 697.50,316.50 L697.50,341.50 Q697.5,346.5 692.50,346.50 L660.50,346.50 Q655.5,346.5 655.50,351.50 L655.50,400.50 Q655.5,405.5 660.50,405.50 L666.50,405.50"/>
<path d="M698.5,366.5 L698.50,385.50"/>
<path d="M731.5,407.5 L736.00,407.50 Q740.5,407.5 740.50,412.00 L740.50,458.50 Q740.5,463.5 735.50,463.50 L612.50,463.50 Q607.5,463.5 607.50,458.50 L607.50,316.50 Q607.5,311.5 612.50,311.50 L618.50,311.50"/>
<path d="M698.5,477.5 L698.50,428.50"/>
<path d="M650.5,247.5 L650.50,278.50"/>
<path d="M360.5,172.5 L360.50,203.50"/>
<path d="M473.5,172.5 L473.50,203.50"/>
</g>
<g fill="#b0b0b0">
<path d="M281.5,161 L279.5,156.2 L283.5,156.2Z"/>
<path d="M393.5,203 L391.5,198.2 L395.5,198.2Z"/>
<path d="M538.5,278 L536.5,273.2 L540.5,273.2Z"/>
<path d="M249,171.5 L244.2,169.5 L244.2,173.5Z"/>
<path d="M345,225.5 L340.2,223.5 L340.2,227.5Z"/>
<path d="M618,289.5 L613.2,287.5 L613.2,291.5Z"/>
<path d="M506,310.5 L501.2,308.5 L501.2,312.5Z"/>
<path d="M618,297.5 L613.2,295.5 L613.2,299.5Z"/>
<path d="M506,289.5 L501.2,287.5 L501.2,291.5Z"/>
<path d="M249,193.5 L244.2,191.5 L244.2,195.5Z"/>
<path d="M473.5,247 L471.5,251.8 L475.5,251.8Z"/>
<path d="M393.5,247 L391.5,251.8 L395.5,251.8Z"/>
<path d="M281.5,204 L279.5,208.8 L283.5,208.8Z"/>
<path d="M360.5,247 L358.5,251.8 L362.5,251.8Z"/>
<path d="M538.5,322 L536.5,326.8 L540.5,326.8Z"/>
<path d="M634.5,322 L632.5,326.8 L636.5,326.8Z"/>
<path d="M457.5,247 L455.5,251.8 L459.5,251.8Z"/>
<path d="M553.5,322 L551.5,326.8 L555.5,326.8Z"/>
<path d="M521.5,322 L519.5,326.8 L523.5,326.8Z"/>
<path d="M719,289.5 L714.2,287.5 L714.2,291.5Z"/>
<path d="M666,405.5 L661.2,403.5 L661.2,407.5Z"/>
<path d="M698.5,385 L696.5,380.2 L700.5,380.2Z"/>
<path d="M618,311.5 L613.2,309.5 L613.2,313.5Z"/>
<path d="M698.5,428 L696.5,432.8 L700.5,432.8Z"/>
<path d="M650.5,278 L648.5,273.2 L652.5,273.2Z"/>
<path d="M360.5,203 L358.5,198.2 L362.5,198.2Z"/>
<path d="M473.5,203 L471.5,198.2 L475.5,198.2Z"/>
</g>
<rect x="249" y="161" width="65" height="43" fill="#0b3a9f"/>
<text fill="#fff" stroke="#fff" stroke-width="0.25" font-size="8.2" letter-spacing="-0.1"><tspan x="252.4" y="177.8">Discussing and</tspan><tspan x="252.4" y="187.0">planning</tspan></text>
<text x="311" y="200.7" fill="#fff" font-size="8.8" font-weight="bold" text-anchor="end">1</text>
<rect x="345" y="203.4" width="65" height="43.2" fill="#0b3a9f"/>
<text fill="#fff" stroke="#fff" stroke-width="0.25" font-size="8.2" letter-spacing="-0.1"><tspan x="348.4" y="211.9">Design</tspan><tspan x="348.4" y="221.5">application</tspan><tspan x="348.4" y="231.1">interface</tspan></text>
<text x="407" y="243.3" fill="#fff" font-size="8.8" font-weight="bold" text-anchor="end">2</text>
<rect x="441" y="203.4" width="65" height="43.2" fill="#0b3a9f"/>
<text fill="#fff" stroke="#fff" stroke-width="0.25" font-size="8.2" letter-spacing="-0.1"><tspan x="444.4" y="211.9">Design</tspan><tspan x="444.4" y="221.5">application</tspan><tspan x="444.4" y="231.1">architecture</tspan></text>
<text x="503" y="243.3" fill="#fff" font-size="8.8" font-weight="bold" text-anchor="end">3</text>
<rect x="505.3" y="278" width="64.7" height="44" fill="#0b3a9f"/>
<text fill="#fff" stroke="#fff" stroke-width="0.25" font-size="8.2" letter-spacing="-0.1"><tspan x="508.7" y="287.0">Reviewing and</tspan><tspan x="508.7" y="296.6">approving</tspan><tspan x="508.7" y="306.2">designs</tspan></text>
<text x="567.0" y="318.7" fill="#fff" font-size="8.8" font-weight="bold" text-anchor="end">4</text>
<rect x="618" y="278" width="65" height="44" fill="#0b3a9f"/>
<text fill="#fff" stroke="#fff" stroke-width="0.25" font-size="8.2" letter-spacing="-0.1"><tspan x="621.4" y="296.2">Programming</tspan><tspan x="621.4" y="305.4">application</tspan></text>
<text x="680" y="318.7" fill="#fff" font-size="8.8" font-weight="bold" text-anchor="end">5</text>
<rect x="666" y="385" width="65" height="43" fill="#0b3a9f"/>
<text fill="#fff" stroke="#fff" stroke-width="0.25" font-size="8.2" letter-spacing="-0.1"><tspan x="669.4" y="403.4">Quality</tspan><tspan x="669.4" y="412.6">assurance</tspan></text>
<text x="728" y="424.7" fill="#fff" font-size="8.8" font-weight="bold" text-anchor="end">6</text>
<g fill="none" stroke="#0a35b0" stroke-width="1.2" stroke-linejoin="round">
<path d="M232.70000000000002,289.40000000000003 L245.4,275.1 L241.8,283.3 L254.4,268.1"/>
<path d="M372.0,338.2 L384.7,323.9 L381.09999999999997,332.09999999999997 L393.7,316.9"/>
<path d="M436.0,390.6 L448.7,376.3 L445.09999999999997,384.5 L457.7,369.3"/>
<path d="M436.0,460.3 L448.7,446.0 L445.09999999999997,454.2 L457.7,439"/>
<path d="M553.3,262.6 L566.0,248.3 L562.4,256.5 L575,241.3"/>
<path d="M553.8,380.8 L566.5,366.5 L562.9,374.7 L575.5,359.5"/>
</g>
<g fill="#0a37a8" stroke="#0a37a8" stroke-width="0.2" font-size="7.4">
<text x="281" y="126" text-anchor="middle">Customer requirements</text>
<text x="200.5" y="170.5" text-anchor="middle">Formalized list</text>
<text x="198.5" y="179" text-anchor="middle">of requirements</text>
<text x="361" y="168.5" text-anchor="middle">Drawing standards</text>
<text x="473.3" y="168.5" text-anchor="middle">Architecture standards</text>
<text x="569.8" y="206" text-anchor="middle">Final design</text>
<text x="546.4" y="225.5" text-anchor="start">Changes</text>
<text x="546.4" y="234.5" text-anchor="start">in architecture</text>
<text x="650" y="243.5" text-anchor="middle">Programming standards</text>
<text x="723" y="292" text-anchor="start">Product</text>
<text x="701.8" y="318" text-anchor="start">Test versions</text>
<text x="484" y="306.5" text-anchor="middle">Designs</text>
<text x="486.7" y="330.5" text-anchor="middle">Changes</text>
<text x="238" y="303.5" text-anchor="middle">Changes in requirements</text>
<text x="355.5" y="346.5" text-anchor="middle">Changes in design</text>
<text x="576" y="348.5" text-anchor="start">Senior</text>
<text x="576" y="357.5" text-anchor="start">programmer</text>
<text x="698" y="361.5" text-anchor="middle">QA standards</text>
<text x="521.5" y="373.5" text-anchor="middle">Customer</text>
<text x="420" y="400" text-anchor="middle">Senior programmer</text>
<text x="430" y="469.5" text-anchor="middle">Senior designer</text>
<text x="674" y="456.5" text-anchor="middle">Bug reports</text>
<text x="280.7" y="496" text-anchor="middle">Designers</text>
<text x="634.5" y="486" text-anchor="middle">Programmers</text>
<text x="698.5" y="486" text-anchor="middle">QA team</text>
</g>
<g fill="#0a37a8" stroke="#0a37a8" stroke-width="0.2"><text x="170.8" y="511" font-size="7.1">Node:</text><text x="323.7" y="511" font-size="7.1">Titles:</text><text x="628" y="511" font-size="7.1">Number:</text>
<text x="245" y="519" font-size="8.8" text-anchor="middle">AO</text><text x="473.5" y="519" font-size="8.8" text-anchor="middle">Application Development</text><text x="702" y="519" font-size="8.8" text-anchor="middle">pg. 3</text></g>
</svg><!--/DIAG-->
<!--SCROLL-->
<div class="a" style="left:773px;top:87px;width:11px;height:436px;background:#f6f6f6;border-left:0.5px solid #e2e2e2"></div>
<div class="a" style="left:775.6px;top:121px;width:5.2px;height:366px;background:#c1c1c1;border-radius:3px"></div>
<div class="a" style="left:166px;top:523px;width:618px;height:9.4px;background:linear-gradient(#f9f9f9,#ececec);border-top:0.5px solid #d8d8d8"></div>
<div class="a" style="left:167.2px;top:523.5px;width:10px;height:8.6px;background:linear-gradient(#fdfdfd,#e3e3e3);border-left:0.5px solid #c5c5c5;border-right:1px solid #555"></div>
<div class="a" style="left:170.5px;top:525.5px;width:1px;height:4.5px;background:#555"></div>
<div class="a" style="left:173px;top:525.5px;width:1px;height:4.5px;background:#555"></div>
<div class="a" style="left:178px;top:523.5px;width:30px;height:8.6px;background:linear-gradient(#fafafa,#e9e9e9);border-right:0.5px solid #d0d0d0"></div>
<div class="a" style="left:192.5px;top:523.5px;width:0.5px;height:8.6px;background:#d6d6d6"></div>
<svg class="a" style="left:0;top:0;z-index:2" width="800" height="540">
<path d="M182.8,527.6 l3.2,-2 v4z M202.8,527.6 l-3.2,-2 v4z" fill="#bdbdbd"/>
<path d="M263.3,526.2 l1.8,-1.8 l1.8,1.8 M263.3,529 l1.8,1.8 l1.8,-1.8" stroke="#222" stroke-width="0.8" fill="none"/>
<g fill="#f4f4f4" stroke="#8a8a8a" stroke-width="0.6"><rect x="272.2" y="524.5" width="5.5" height="6.5"/><rect x="278.7" y="524.5" width="5.5" height="6.5"/><rect x="285.2" y="524.5" width="5.5" height="6.5"/><rect x="291.7" y="524.5" width="5.5" height="6.5"/></g>
<rect x="270.3" y="523.5" width="1.5" height="8.5" fill="#8a8a8a"/><rect x="297.5" y="523.5" width="1.5" height="8.5" fill="#8a8a8a"/>
<rect x="320.5" y="525" width="408" height="5" rx="2.5" fill="#747474"/>
<g fill="none" stroke="#1f3fb0" stroke-width="0.7" stroke-dasharray="1 1"><rect x="766" y="524" width="8" height="7.5"/><rect x="775" y="524" width="7.5" height="7.5"/></g>
<circle cx="770" cy="527.7" r="2" fill="#8cc8f0"/><rect x="777" y="525.5" width="3.5" height="4.5" rx="1" fill="none" stroke="#aaa" stroke-width="0.6"/>
</svg>
<div class="a" style="left:210.8px;top:523.8px;font-size:7.8px;color:#000;-webkit-text-stroke:0.2px #000">75%</div>
<!--/SCROLL-->
</body></html>
